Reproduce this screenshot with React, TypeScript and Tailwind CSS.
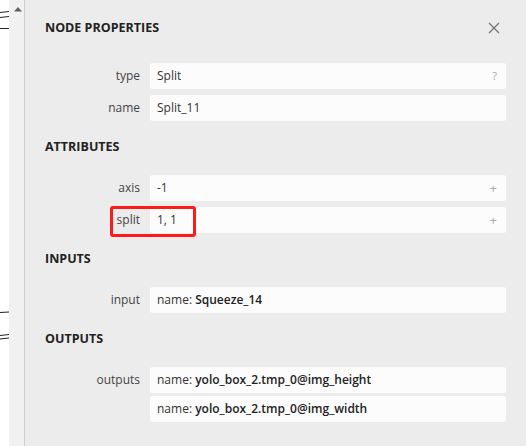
import React from "react";

type Row = { label: string; values: React.ReactNode[]; icon?: "?" | "+" };

function Field({ children, icon }: { children: React.ReactNode; icon?: "?" | "+" }) {
  return (
    <div className="flex h-[26px] items-center justify-between rounded-[3px] bg-[#fcfcfc] pl-[7px] pr-[9px] text-[12px] text-[#333]">
      <span className="truncate">{children}</span>
      {icon === "?" && <span className="text-[11px] text-[#aaa]">?</span>}
      {icon === "+" && <span className="text-[13px] leading-none text-[#aaa]">+</span>}
    </div>
  );
}

function PropRow({ row, highlight }: { row: Row; highlight?: boolean }) {
  return (
    <div className="relative flex">
      <div className="w-[105px] shrink-0 pr-[10px] text-right text-[12px] leading-[26px] text-[#444]">{row.label}</div>
      <div className="flex flex-1 flex-col gap-[3px]">
        {row.values.map((v, i) => (
          <Field key={i} icon={row.icon}>
            {v}
          </Field>
        ))}
      </div>
      {highlight && (
        <div className="pointer-events-none absolute left-[65px] top-[-1px] h-[31px] w-[86px] rounded-[3px] border-[3px] border-[#ff1a1a]" />
      )}
    </div>
  );
}

function Section({ title, className }: { title: string; className?: string }) {
  return <div className={"text-[12.5px] font-bold leading-[18px] text-[#222] " + (className ?? "")}>{title}</div>;
}

const nameVal = (s: string) => (
  <>
    name: <b className="font-semibold text-[#222]">{s}</b>
  </>
);

export default function App() {
  return (
    <div className="flex h-[446px] w-[526px] overflow-hidden bg-white" style={{ fontFamily: '"Open Sans", "Noto Sans", sans-serif' }}>
      <div className="relative w-[9px] shrink-0 bg-white">
        <svg width="9" height="446" className="absolute left-0 top-0">
          <path d="M0 12.5 L9 11.5 M0 17.5 L9 16.5 M0 28.5 L9 28.5" stroke="#222" strokeWidth="1" />
          <path d="M0 312.5 L9 312 M0 335.5 L9 334.5 M0 339 L9 338" stroke="#222" strokeWidth="1" />
        </svg>
      </div>
      <div className="relative w-[16px] shrink-0 border-r border-[#cfcfcf] bg-[#f1f1f1]">
        <svg width="8" height="5" className="absolute left-[5px] top-[7px]">
          <path d="M0 4.5 L4 0 L8 4.5 Z" fill="#606060" />
        </svg>
      </div>
      <div className="flex-1 bg-[#ececec] pl-[20px] pr-[20px] pt-[19px]">
        <div className="flex items-center justify-between">
          <Section title="NODE PROPERTIES" />
          <svg width="12" height="12" viewBox="0 0 12 12" className="mr-[6px]">
            <path d="M1 1 L11 11 M11 1 L1 11" stroke="#777" strokeWidth="1.4" />
          </svg>
        </div>
        <div className="mt-[26px] flex flex-col gap-[6px]">
          <PropRow row={{ label: "type", values: ["Split"], icon: "?" }} />
          <PropRow row={{ label: "name", values: ["Split_11"] }} />
        </div>
        <Section title="ATTRIBUTES" className="mt-[17px]" />
        <div className="mt-[19px] flex flex-col gap-[6px]">
          <PropRow row={{ label: "axis", values: ["-1"], icon: "+" }} />
          <PropRow row={{ label: "split", values: ["1, 1"], icon: "+" }} highlight />
        </div>
        <Section title="INPUTS" className="mt-[17px]" />
        <div className="mt-[19px]">
          <PropRow row={{ label: "input", values: [nameVal("Squeeze_14")] }} />
        </div>
        <Section title="OUTPUTS" className="mt-[17px]" />
        <div className="mt-[19px]">
          <PropRow
            row={{
              label: "outputs",
              values: [nameVal("yolo_box_2.tmp_0@img_height"), nameVal("yolo_box_2.tmp_0@img_width")],
            }}
          />
        </div>
      </div>
    </div>
  );
}
